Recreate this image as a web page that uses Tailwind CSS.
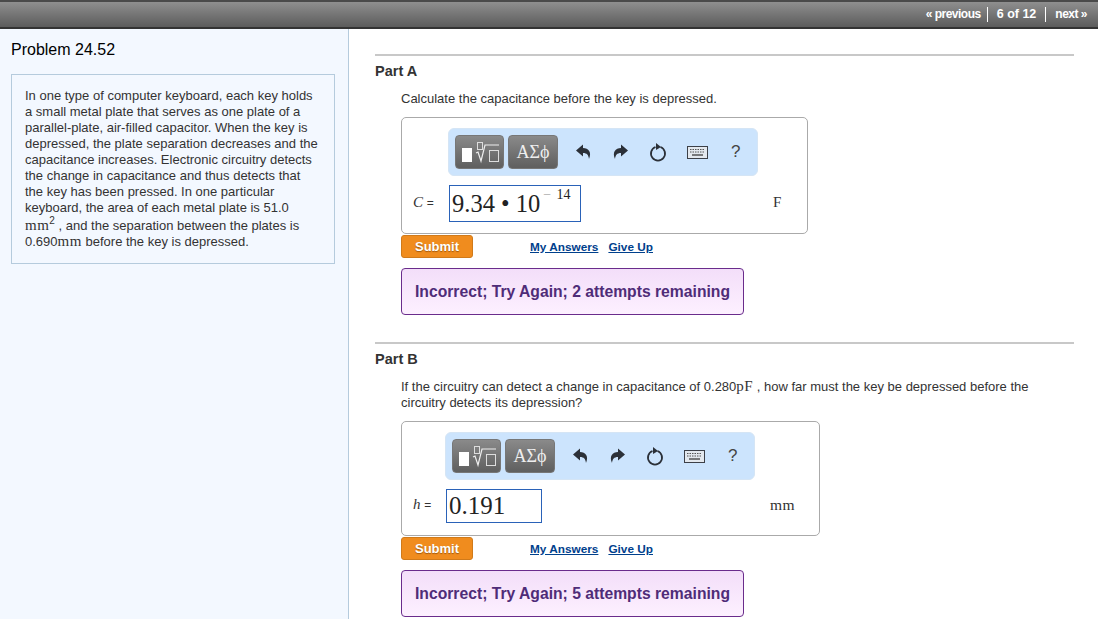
<!DOCTYPE html>
<html lang="en">
<head>
  <meta charset="UTF-8">
  <title>Problem 24.52</title>
  <script src="https://cdn.jsdelivr.net/npm/@tailwindcss/browser@4"></script>
</head>
<body class="bg-white font-['Liberation_Sans',Arial,sans-serif] text-[#333] h-[619px] w-[1098px] overflow-hidden">
  <!-- top bar -->
  <div class="h-[29px] flex items-center justify-end pr-[11px] text-[12px] font-bold text-white bg-gradient-to-b from-[#8f8f8f] to-[#5c5c5c] border-t-2 border-t-[#4a4a4a] border-b-2 border-b-[#333]">
    <span class="pr-[6px] border-r border-white leading-[15px] tracking-[-0.5px]">« previous</span>
    <span class="px-[9px] border-r border-white leading-[15px] text-[12.5px]">6 of 12</span>
    <span class="pl-[9px] leading-[15px] tracking-[-0.5px]">next »</span>
  </div>
  <div class="flex h-[590px]">
    <!-- left column -->
    <div class="w-[349px] shrink-0 bg-[#f3f8ff] border-r border-[#b5cbdd] pl-[11px] pr-[13px]">
      <h1 class="text-[16px] leading-[20px] mt-[11px] text-black">Problem 24.52</h1>
      <div class="mt-[14px] border border-[#b5cbdd] pl-[13px] pr-[12px] pt-[13px] pb-[14px] h-[190px] text-[13px] leading-[16px]">
        <p>In one type of computer keyboard, each key holds a small metal plate that serves as one plate of a parallel-plate, air-filled capacitor. When the key is depressed, the plate separation decreases and the capacitance increases. Electronic circuitry detects the change in capacitance and thus detects that the key has been pressed. In one particular keyboard, the area of each metal plate is 51.0 <span class="font-['Liberation_Serif',serif] text-[15px] tracking-[0.5px] inline-block mt-[1px]">mm<sup class="text-[10px] -top-[6px] font-['Liberation_Sans',sans-serif] tracking-normal">2</sup></span> , and the separation between the plates is 0.690<span class="font-['Liberation_Serif',serif] text-[15px] tracking-[0.5px] leading-[0]">mm</span> before the key is depressed.</p>
      </div>
    </div>
    <!-- right column -->
    <div class="w-[699px] ml-[26px] pt-[25px]">
      <!-- part A -->
      <div class="border-t-2 border-[#c8c8c8] pt-[6px]">
        <h2 class="text-[14.5px] leading-[18px] font-bold text-[#333]">Part A</h2>
        <div class="pl-[26px]">
          <p class="mt-[11px] text-[13px] leading-[16px]">Calculate the capacitance before the key is depressed.</p>
          <div class="mt-[10px] w-[407px] h-[117px] border border-[#aaa] rounded-[5px] relative">
            <div class="ml-[46px] mt-[10px] w-[310px] h-[48px] bg-[#cce4fd] rounded-[6px] border border-[#d5e5f5] flex items-center pl-[6px]">
              <div class="w-[49px] h-[34px] rounded-[4px] border border-[#777] bg-gradient-to-b from-[#8a8a8a] to-[#5f5f5f] flex items-center justify-center">
                <svg width="41" height="28" viewBox="0 0 41 28" fill="none">
                  <rect x="3" y="10" width="10" height="14" fill="#fff"/>
                  <rect x="18.5" y="4.5" width="5" height="7" stroke="#ddd"/>
                  <path d="M17 15l2 -1 3 9 4 -16h14" stroke="#eee" stroke-width="1.2"/>
                  <rect x="30.5" y="12.5" width="9" height="11" stroke="#ddd"/>
                </svg>
              </div>
              <div class="ml-[4px] w-[50px] h-[34px] rounded-[4px] border border-[#777] bg-gradient-to-b from-[#8a8a8a] to-[#5f5f5f] flex items-center justify-center text-[#eee] text-[18px] font-['Liberation_Serif',serif]">ΑΣϕ</div>
              <svg class="ml-[17px]" width="18" height="18" viewBox="0 0 18 18"><path d="M1 7.5 L8 1.5 V5 C13.5 5 17 9 14 16 C13.5 12 12 10 8 10 V13.5 Z" fill="#2b3038"/></svg>
              <svg class="ml-[18px]" width="18" height="18" viewBox="0 0 18 18"><path d="M17 7.5 L10 1.5 V5 C4.5 5 1 9 4 16 C4.5 12 6 10 10 10 V13.5 Z" fill="#2b3038"/></svg>
              <svg class="ml-[19px]" width="20" height="20" viewBox="0 0 20 20" fill="none"><path d="M7.5 5 A7 7 0 1 0 12.5 5" stroke="#2b3038" stroke-width="1.8"/><path d="M8 1 L13 5 L8 8 Z" fill="#2b3038"/></svg>
              <svg class="ml-[19px]" width="21" height="13" viewBox="0 0 21 13" fill="none"><rect x="0.5" y="0.5" width="20" height="12" fill="#e3e8ee" stroke="#3c4048"/><path d="M3 3.5h15M3 6h15" stroke="#555" stroke-dasharray="1.5 1"/><path d="M5 9h11" stroke="#555" stroke-width="1.5"/></svg>
              <span class="ml-[23px] text-[17px] leading-[20px] text-[#444]">?</span>
            </div>
            <div class="flex mt-[9px] items-center">
              <span class="ml-[11px] w-[36px] text-[15px] font-['Liberation_Serif',serif] text-[#333] -mt-[3px]"><i>C</i> <span class="font-['Liberation_Sans',sans-serif] text-[12px]">=</span></span>
              <div class="w-[132px] h-[37px] border border-[#2a62b8] flex items-start pl-[2px] font-['Liberation_Serif',serif] text-[#222]">
                <span class="text-[24.5px] leading-[35px]">9.34 • 10</span>
                <span class="text-[14px] leading-[16px] ml-[3px] mt-[1px]"><span class="text-[#aaa] mr-[2px]">−</span> 14</span>
              </div>
              <span class="ml-[192px] text-[15px] font-['Liberation_Serif',serif] -mt-[3px]">F</span>
            </div>
          </div>
        </div>
        <div class="pl-[26px] flex items-start mt-[1px]">
          <div class="w-[72px] h-[23px] bg-[#f08c1e] border border-[#d07a1a] rounded-[3px] text-center text-white text-[13px] font-bold leading-[21px] [text-shadow:0_1px_1px_#a05a10]">Submit</div>
          <a class="ml-[57px] mt-[5px] text-[11.8px] font-bold text-[#00408c] underline leading-[14px]">My Answers</a>
          <a class="ml-[10px] mt-[5px] text-[11.8px] font-bold text-[#00408c] underline leading-[14px]">Give Up</a>
        </div>
        <div class="ml-[26px] mt-[10px] w-[343px] h-[47px] rounded-[4px] border border-[#6a2c8c] bg-gradient-to-b from-[#f3def9] to-[#fdf0ff] flex items-center justify-center text-[15.7px] font-bold text-[#4f2c78]">Incorrect; Try Again; 2 attempts remaining</div>
      </div>
      <!-- part B -->
      <div class="mt-[27px] border-t-2 border-[#c8c8c8] pt-[6px]">
        <h2 class="text-[14.5px] leading-[18px] font-bold text-[#333]">Part B</h2>
        <div class="pl-[26px]">
          <p class="mt-[11px] text-[13px] leading-[16px] w-[640px]">If the circuitry can detect a change in capacitance of 0.280<span class="font-['Liberation_Serif',serif] text-[15px] tracking-[0.5px] leading-[0]">pF</span> , how far must the key be depressed before the circuitry detects its depression?</p>
          <div class="mt-[10px] w-[419px] h-[115px] border border-[#aaa] rounded-[5px] relative">
            <div class="ml-[43px] mt-[10px] w-[310px] h-[48px] bg-[#cce4fd] rounded-[6px] border border-[#d5e5f5] flex items-center pl-[6px]">
              <div class="w-[49px] h-[34px] rounded-[4px] border border-[#777] bg-gradient-to-b from-[#8a8a8a] to-[#5f5f5f] flex items-center justify-center">
                <svg width="41" height="28" viewBox="0 0 41 28" fill="none">
                  <rect x="3" y="10" width="10" height="14" fill="#fff"/>
                  <rect x="18.5" y="4.5" width="5" height="7" stroke="#ddd"/>
                  <path d="M17 15l2 -1 3 9 4 -16h14" stroke="#eee" stroke-width="1.2"/>
                  <rect x="30.5" y="12.5" width="9" height="11" stroke="#ddd"/>
                </svg>
              </div>
              <div class="ml-[4px] w-[50px] h-[34px] rounded-[4px] border border-[#777] bg-gradient-to-b from-[#8a8a8a] to-[#5f5f5f] flex items-center justify-center text-[#eee] text-[18px] font-['Liberation_Serif',serif]">ΑΣϕ</div>
              <svg class="ml-[17px]" width="18" height="18" viewBox="0 0 18 18"><path d="M1 7.5 L8 1.5 V5 C13.5 5 17 9 14 16 C13.5 12 12 10 8 10 V13.5 Z" fill="#2b3038"/></svg>
              <svg class="ml-[18px]" width="18" height="18" viewBox="0 0 18 18"><path d="M17 7.5 L10 1.5 V5 C4.5 5 1 9 4 16 C4.5 12 6 10 10 10 V13.5 Z" fill="#2b3038"/></svg>
              <svg class="ml-[19px]" width="20" height="20" viewBox="0 0 20 20" fill="none"><path d="M7.5 5 A7 7 0 1 0 12.5 5" stroke="#2b3038" stroke-width="1.8"/><path d="M8 1 L13 5 L8 8 Z" fill="#2b3038"/></svg>
              <svg class="ml-[19px]" width="21" height="13" viewBox="0 0 21 13" fill="none"><rect x="0.5" y="0.5" width="20" height="12" fill="#e3e8ee" stroke="#3c4048"/><path d="M3 3.5h15M3 6h15" stroke="#555" stroke-dasharray="1.5 1"/><path d="M5 9h11" stroke="#555" stroke-width="1.5"/></svg>
              <span class="ml-[23px] text-[17px] leading-[20px] text-[#444]">?</span>
            </div>
            <div class="flex mt-[9px] items-center">
              <span class="ml-[11px] w-[33px] text-[15px] font-['Liberation_Serif',serif] text-[#333] -mt-[3px]"><i>h</i> <span class="font-['Liberation_Sans',sans-serif] text-[12px]">=</span></span>
              <div class="w-[96px] h-[34px] border border-[#2a62b8] pl-[2px] font-['Liberation_Serif',serif] text-[#222] text-[25px] leading-[32px]">0.191</div>
              <span class="ml-[228px] text-[15.5px] tracking-[0.5px] font-['Liberation_Serif',serif] -mt-[3px]">mm</span>
            </div>
          </div>
        </div>
        <div class="pl-[26px] flex items-start mt-[1px]">
          <div class="w-[72px] h-[23px] bg-[#f08c1e] border border-[#d07a1a] rounded-[3px] text-center text-white text-[13px] font-bold leading-[21px] [text-shadow:0_1px_1px_#a05a10]">Submit</div>
          <a class="ml-[57px] mt-[5px] text-[11.8px] font-bold text-[#00408c] underline leading-[14px]">My Answers</a>
          <a class="ml-[10px] mt-[5px] text-[11.8px] font-bold text-[#00408c] underline leading-[14px]">Give Up</a>
        </div>
        <div class="ml-[26px] mt-[10px] w-[343px] h-[47px] rounded-[4px] border border-[#6a2c8c] bg-gradient-to-b from-[#f3def9] to-[#fdf0ff] flex items-center justify-center text-[15.7px] font-bold text-[#4f2c78]">Incorrect; Try Again; 5 attempts remaining</div>
      </div>
    </div>
  </div>
</body>
</html>
